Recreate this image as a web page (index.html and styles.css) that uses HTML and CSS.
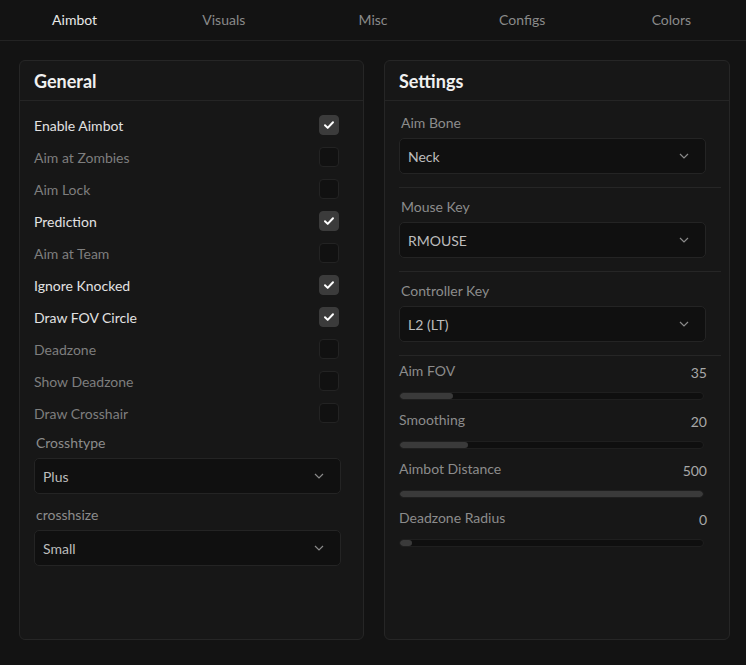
FILE: index.html
```html
<!DOCTYPE html>
<html lang="en">
<head>
<meta charset="utf-8">
<title>Aimbot</title>
<link rel="stylesheet" href="styles.css">
</head>
<body>
<nav class="tabs">
  <div class="tab active">Aimbot</div>
  <div class="tab">Visuals</div>
  <div class="tab">Misc</div>
  <div class="tab">Configs</div>
  <div class="tab">Colors</div>
</nav>
<main class="content">
  <section class="panel">
    <header class="panel-head">General</header>
    <div class="panel-body general">
      <div class="row on"><span>Enable Aimbot</span><span class="check checked"><svg viewBox="0 0 20 20"><path d="M6 10.3l2.7 2.6L14 7.3"/></svg></span></div>
      <div class="row"><span>Aim at Zombies</span><span class="check"></span></div>
      <div class="row"><span>Aim Lock</span><span class="check"></span></div>
      <div class="row on"><span>Prediction</span><span class="check checked"><svg viewBox="0 0 20 20"><path d="M6 10.3l2.7 2.6L14 7.3"/></svg></span></div>
      <div class="row"><span>Aim at Team</span><span class="check"></span></div>
      <div class="row on"><span>Ignore Knocked</span><span class="check checked"><svg viewBox="0 0 20 20"><path d="M6 10.3l2.7 2.6L14 7.3"/></svg></span></div>
      <div class="row on"><span>Draw FOV Circle</span><span class="check checked"><svg viewBox="0 0 20 20"><path d="M6 10.3l2.7 2.6L14 7.3"/></svg></span></div>
      <div class="row"><span>Deadzone</span><span class="check"></span></div>
      <div class="row"><span>Show Deadzone</span><span class="check"></span></div>
      <div class="row"><span>Draw Crosshair</span><span class="check"></span></div>
      <div class="fields">
        <div class="field">
          <div class="label">Crosshtype</div>
          <div class="select"><span>Plus</span><svg class="chev" viewBox="0 0 10 6"><path d="M1 1l4 4 4-4"/></svg></div>
        </div>
        <div class="field">
          <div class="label">crosshsize</div>
          <div class="select"><span>Small</span><svg class="chev" viewBox="0 0 10 6"><path d="M1 1l4 4 4-4"/></svg></div>
        </div>
      </div>
    </div>
  </section>
  <section class="panel">
    <header class="panel-head">Settings</header>
    <div class="panel-body settings">
      <div class="group">
        <div class="label">Aim Bone</div>
        <div class="select"><span>Neck</span><svg class="chev" viewBox="0 0 10 6"><path d="M1 1l4 4 4-4"/></svg></div>
      </div>
      <div class="group">
        <div class="label">Mouse Key</div>
        <div class="select"><span>RMOUSE</span><svg class="chev" viewBox="0 0 10 6"><path d="M1 1l4 4 4-4"/></svg></div>
      </div>
      <div class="group">
        <div class="label">Controller Key</div>
        <div class="select"><span>L2 (LT)</span><svg class="chev" viewBox="0 0 10 6"><path d="M1 1l4 4 4-4"/></svg></div>
      </div>
      <div class="sliders">
        <div class="slider">
          <div class="slider-head"><span class="label">Aim FOV</span><span class="value">35</span></div>
          <div class="track"><div class="fill" style="width:17.4%"></div></div>
        </div>
        <div class="slider">
          <div class="slider-head"><span class="label">Smoothing</span><span class="value">20</span></div>
          <div class="track"><div class="fill" style="width:22.4%"></div></div>
        </div>
        <div class="slider">
          <div class="slider-head"><span class="label">Aimbot Distance</span><span class="value">500</span></div>
          <div class="track"><div class="fill" style="width:100%"></div></div>
        </div>
        <div class="slider">
          <div class="slider-head"><span class="label">Deadzone Radius</span><span class="value">0</span></div>
          <div class="track"><div class="fill" style="width:4%"></div></div>
        </div>
      </div>
    </div>
  </section>
</main>
</body>
</html>
```
FILE: styles.css
```css
* { box-sizing: border-box; }
html, body { margin: 0; padding: 0; }
body {
  width: 746px;
  height: 665px;
  background: #131313;
  font-family: Lato, "Noto Sans", sans-serif;
  font-size: 14px;
  color: #e4e4e4;
  overflow: hidden;
}
.tabs {
  display: grid;
  grid-template-columns: repeat(5, 1fr);
  height: 41px;
  border-bottom: 1px solid #232323;
}
.tab {
  display: flex;
  align-items: center;
  justify-content: center;
  color: #8a8a8a;
  font-size: 14px;
  padding-bottom: 1px;
}
.tab.active { color: #e8e8e8; }
.content {
  display: grid;
  grid-template-columns: 345px 346px;
  column-gap: 20px;
  padding: 19px 17px 0 19px;
}
.panel {
  height: 580px;
  background: #171717;
  border: 1px solid #262626;
  border-radius: 6px;
}
.panel-head {
  height: 40px;
  border-bottom: 1px solid #252525;
  padding: 0 14px;
  display: flex;
  align-items: center;
  font-size: 18px;
  font-weight: 700;
  color: #f0f0f0;
}
.panel-body { padding: 0 8px 0 14px; }
.general { padding-top: 8px; }
.row {
  height: 32px;
  display: flex;
  align-items: center;
  justify-content: space-between;
  padding-right: 16px;
  color: #7e7e7e;
}
.row.on { color: #e2e2e2; }
.check {
  width: 20px;
  height: 20px;
  border-radius: 4px;
  background: #111111;
  border: 1px solid #232323;
  display: flex;
  align-items: center;
  justify-content: center;
}
.check.checked {
  background: #3b3b3b;
  border-color: #3b3b3b;
}
.check svg { width: 20px; height: 20px; flex: none; }
.check path {
  fill: none;
  stroke: #ffffff;
  stroke-width: 2;
  stroke-linecap: round;
  stroke-linejoin: round;
}
.label {
  color: #8c8c8c;
  line-height: 16px;
  display: block;
}
.fields { padding-top: 6px; }
.fields .label { padding-left: 2px; }
.field + .field { margin-top: 13px; }
.select {
  margin-top: 7px;
  height: 36px;
  width: 307px;
  background: #101010;
  border: 1px solid #242424;
  border-radius: 5px;
  display: flex;
  align-items: center;
  justify-content: space-between;
  padding: 0 16px 0 8px;
  color: #bdbdbd;
}
.chev { width: 10px; height: 6px; }
.chev path {
  fill: none;
  stroke: #8a8a8a;
  stroke-width: 1.2;
}
.settings { padding-top: 14px; }
.settings .label { padding-left: 2px; }
.group {
  border-bottom: 1px solid #262626;
  padding-bottom: 13px;
  margin-bottom: 11px;
}
.group:nth-child(3) { margin-bottom: 7px; }
.sliders { padding-right: 17px; }
.slider { margin-bottom: 12px; }
.slider-head {
  display: flex;
  justify-content: space-between;
  align-items: flex-start;
  height: 16px;
  line-height: 16px;
  margin-right: -3px;
}
.slider-head .label { padding-left: 0; }
.value {
  color: #a8a8a8;
  position: relative;
  top: 2px;
}
.track {
  margin-top: 13px;
  height: 8px;
  background: #0f0f0f;
  border: 1px solid #1f1f1f;
  border-radius: 5px;
  overflow: hidden;
}
.fill {
  height: 100%;
  background: #3a3a3a;
  border-radius: 4px;
}
```
